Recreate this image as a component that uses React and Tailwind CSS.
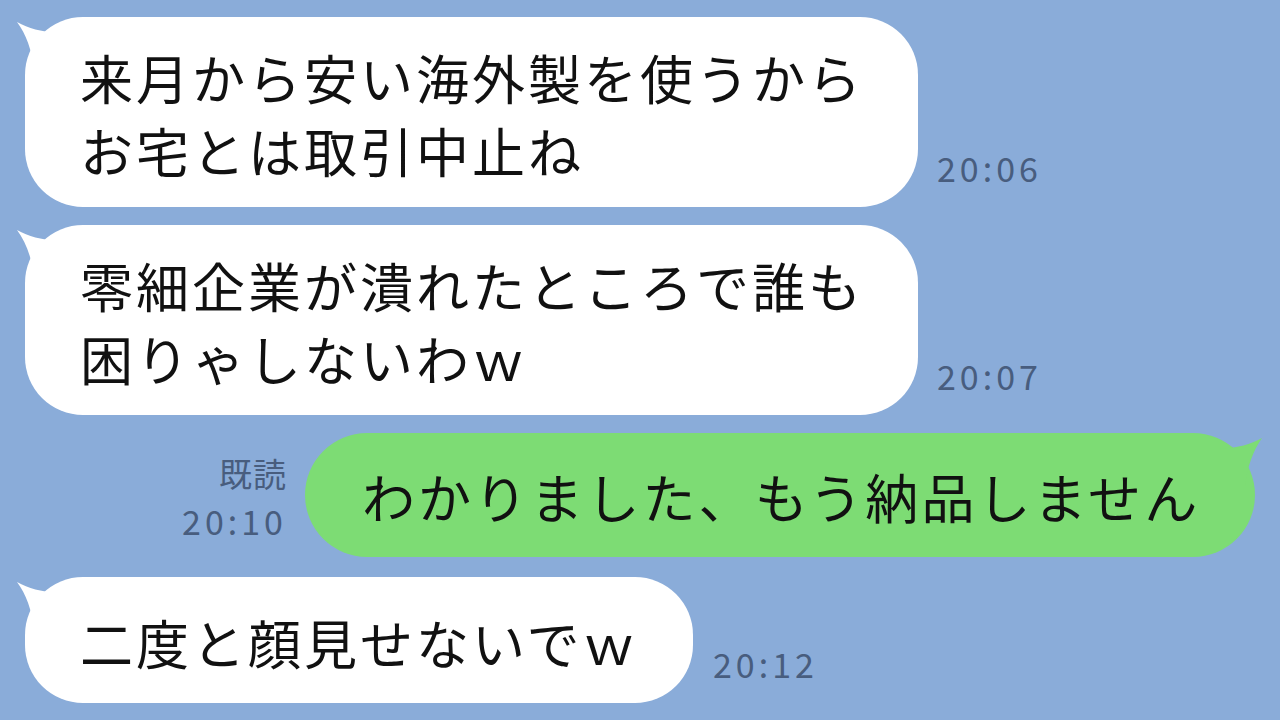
const font = { fontFamily: '"Noto Sans CJK JP", "Noto Sans", sans-serif' };

function LeftTail() {
  return (
    <svg className="absolute left-[-9px] top-[3px]" width="48" height="50" viewBox="0 0 48 50">
      <path d="M1 2 C14 9 28 13 46 12 L46 50 L18 50 C16 30 10 14 1 2 Z" fill="#ffffff" />
    </svg>
  );
}

function RightTail() {
  return (
    <svg className="absolute right-[-8px] top-[4px]" width="48" height="50" viewBox="0 0 48 50">
      <path d="M47 1 C34 8 20 12 2 11 L2 50 L30 50 C32 30 38 14 47 1 Z" fill="#7ddc74" />
    </svg>
  );
}

function Time({ children, className }) {
  return (
    <div className={`text-[34px] leading-none tracking-[4px] text-[#485d7e] ${className}`}>{children}</div>
  );
}

function Left({ w, h, lines, time, gap }) {
  return (
    <div className="flex items-end pl-[25px]">
      <div
        className="relative flex flex-col justify-center bg-white rounded-[58px] pl-[55px] pt-[4px] text-[53px] leading-[73px] tracking-[3px] text-[#111]"
        style={{ width: w, height: h }}
      >
        <LeftTail />
        <div className="relative">
          {lines.map((l, i) => (
            <div key={i} className="whitespace-nowrap">{l}</div>
          ))}
        </div>
      </div>
      <Time className={`mb-[22px] ${gap}`}>{time}</Time>
    </div>
  );
}

export default function App() {
  return (
    <div className="w-[1280px] h-[720px] overflow-hidden bg-[#8aacd9] pt-[17px] flex flex-col gap-[18px]" style={font}>
      <Left w={893} h={190} lines={["来月から安い海外製を使うから", "お宅とは取引中止ね"]} time="20:06" gap="ml-[19px]" />
      <Left w={893} h={190} lines={["零細企業が潰れたところで誰も", "困りゃしないわｗ"]} time="20:07" gap="ml-[19px]" />
      <div className="flex items-end justify-end pr-[25px]">
        <div className="mr-[18px] mb-[19px] flex flex-col items-end text-[#485d7e]">
          <div className="text-[33px] leading-none tracking-[1px] mb-[14px]">既読</div>
          <Time>20:10</Time>
        </div>
        <div className="relative flex items-center w-[950px] h-[124px] rounded-full bg-[#7ddc74] pl-[57px] pt-[3px] text-[53px] tracking-[3.1px] text-[#111]">
          <RightTail />
          <div className="relative whitespace-nowrap">わかりました、もう納品しません</div>
        </div>
      </div>
      <div className="mt-[2px]">
        <Left w={668} h={126} lines={["二度と顔見せないでｗ"]} time="20:12" gap="ml-[20px]" />
      </div>
    </div>
  );
}
